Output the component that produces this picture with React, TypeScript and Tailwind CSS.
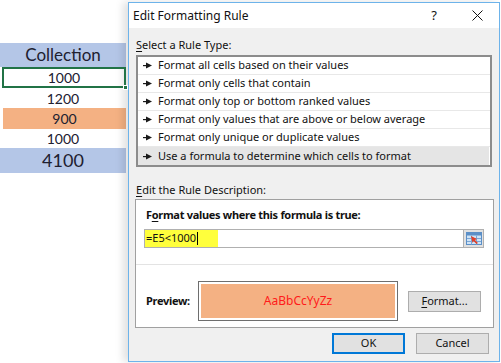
import React from "react";

const ui = "font-['Noto_Sans',sans-serif]";

const ruleTypes = [
  "Format all cells based on their values",
  "Format only cells that contain",
  "Format only top or bottom ranked values",
  "Format only values that are above or below average",
  "Format only unique or duplicate values",
  "Use a formula to determine which cells to format",
];

function Bullet() {
  return (
    <svg width="9" height="7" viewBox="0 0 9 7" className="shrink-0">
      <rect x="0" y="3" width="4" height="1.2" fill="#1a1a1a" />
      <polygon points="3,0.5 9,3.5 3,6.5" fill="#1a1a1a" />
    </svg>
  );
}

function RangePicker() {
  return (
    <svg width="16" height="13" viewBox="0 0 16 13">
      <rect x="0.5" y="0.5" width="15" height="12" fill="#cfe3f5" stroke="#5b8fc7" />
      <rect x="1" y="1" width="14" height="2.5" fill="#5b8fc7" />
      <path d="M1 6.5h14M1 9.5h14M5.5 3.5v9M10.5 3.5v9" stroke="#7aa6d6" strokeWidth="1" />
      <polygon points="5,4 11,7 9,8 12,11 10.5,12 7.5,9 6.5,11" fill="#e0402a" />
    </svg>
  );
}

function Cell({ h, children, className = "" }: { h: string; children: React.ReactNode; className?: string }) {
  return <div className={`flex items-center justify-center ${h} ${className}`}>{children}</div>;
}

export default function App() {
  return (
    <div className="flex h-[363px] w-[501px] overflow-hidden bg-white">
      {/* sheet behind the dialog */}
      <div className="w-[126px] shrink-0 pt-[43px] font-['Lato',sans-serif] text-[#202030]">
        <Cell h="h-[24px]" className="bg-[#b4c6e7] text-[17px]">Collection</Cell>
        <div className="relative ml-[2px]">
          <Cell h="h-[21px]" className="border-2 border-[#217346] text-[14px]">1000</Cell>
          <div className="absolute -bottom-[2px] -right-[2px] h-[5px] w-[5px] border border-white bg-[#217346]" />
        </div>
        <Cell h="h-[20px]" className="text-[14px]">1200</Cell>
        <Cell h="h-[21px]" className="ml-[3px] bg-[#f4b183] text-[14px]">900</Cell>
        <Cell h="h-[19px]" className="text-[14px]">1000</Cell>
        <Cell h="h-[25px]" className="bg-[#b4c6e7] text-[18px]">4100</Cell>
      </div>

      {/* dialog */}
      <div
        className={`ml-[2px] mt-[2px] flex h-[360px] w-[372px] shrink-0 flex-col border border-[#6db3ea] bg-[#f0f0f0] shadow-[-5px_0_8px_rgba(0,0,0,0.12)] ${ui} text-[11px] text-[#111]`}
      >
        <div className="flex h-[25px] shrink-0 items-center bg-white pl-[4px]">
          <span className="text-[12px]">Edit Formatting Rule</span>
          <span className="ml-auto mr-[35px] text-[13px]">?</span>
          <svg width="11" height="11" viewBox="0 0 11 11" className="mr-[16px]">
            <path d="M0.5 0.5l10 10M10.5 0.5l-10 10" stroke="#111" strokeWidth="1" />
          </svg>
        </div>

        <div className="flex flex-col pl-[6px]">
          <div className="mt-[9px] h-[16px] pl-[1px] leading-[16px]">
            <span className="underline underline-offset-2">S</span>elect a Rule Type:
          </div>
          <div className="ml-[1px] mt-[2px] flex h-[112px] w-[356px] flex-col border-2 border-[#8c8c8c] bg-white">
            {ruleTypes.map((r, i) => (
              <div
                key={r}
                className={`flex h-[18px] items-center gap-[6px] pl-[5px] ${
                  i === ruleTypes.length - 1 ? "mr-[1px] bg-[#e5e5e5]" : "border-b border-[#e8e8e8]"
                }`}
              >
                <Bullet />
                <span>{r}</span>
              </div>
            ))}
          </div>

          <div className="mt-[15px] h-[16px] pl-[1px] leading-[16px]">
            <span className="underline underline-offset-2">E</span>dit the Rule Description:
          </div>
          <div className="mt-[1px] flex h-[129px] w-[359px] flex-col border border-[#a0a0a0] bg-white">
            <div className="mt-[7px] h-[16px] pl-[10px] font-bold leading-[16px] tracking-[-0.3px]">
              F<span className="underline underline-offset-2">o</span>rmat values where this formula is true:
            </div>
            <div className="ml-[8px] mt-[6px] flex h-[19px] w-[340px] items-stretch border border-[#b0b0b0]">
              <div className="flex items-center bg-[#ffff3c] pl-[1px] pr-[20px]">
                <span>=E5&lt;1000</span>
                <span className="ml-[1px] h-[13px] w-px bg-black" />
              </div>
              <div className="ml-auto flex w-[20px] items-center justify-center border-l border-[#b0b0b0] bg-[#e1e1e1]">
                <RangePicker />
              </div>
            </div>
            <div className="mt-[16px] h-px bg-[#e3e3e3]" />
            <div className="mt-[16px] flex items-center">
              <div className="w-[62px] pl-[10px] font-bold tracking-[-0.3px]">Preview:</div>
              <div className="h-[40px] w-[200px] border border-[#6e6e6e] p-[2px]">
                <div className="flex h-full items-center justify-center bg-[#f4b183] text-[12px] text-[#ff1a1a]">
                  AaBbCcYyZz
                </div>
              </div>
              <button className="ml-[10px] flex h-[21px] w-[73px] items-center justify-center border border-[#adadad] bg-[#e1e1e1]">
                <span className="underline underline-offset-2">F</span>ormat...
              </button>
            </div>
          </div>

          <div className="mt-[5px] flex justify-end gap-[11px] pr-[10px]">
            <button className="flex h-[21px] w-[73px] items-center justify-center border-2 border-[#0078d7] bg-[#e1e1e1]">
              OK
            </button>
            <button className="flex h-[21px] w-[73px] items-center justify-center border border-[#adadad] bg-[#e1e1e1]">
              Cancel
            </button>
          </div>
        </div>
      </div>
    </div>
  );
}
